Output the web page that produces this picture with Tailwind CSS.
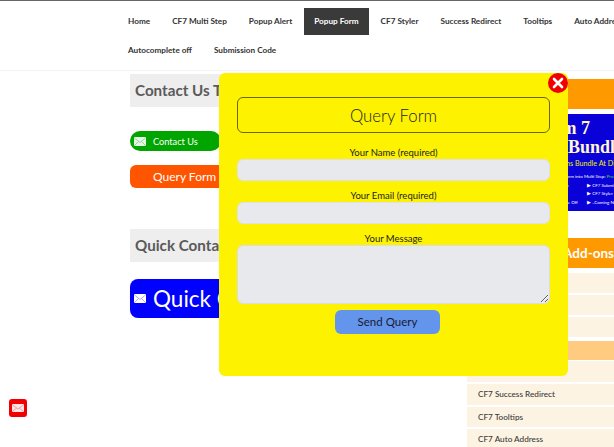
<!DOCTYPE html>
<html lang="en">
<head>
    <meta charset="UTF-8">
    <meta name="viewport" content="width=device-width, initial-scale=1.0">
    <title>Popup Form</title>
    <script src="https://cdn.jsdelivr.net/npm/@tailwindcss/browser@4"></script>
</head>
<body class="relative h-[447px] overflow-hidden bg-white font-['Lato','Open_Sans',sans-serif]">
    <!-- header -->
    <header class="h-[71px] border-t border-t-[#666] border-b border-b-[#f3f3f3] pl-[118px] pt-[7px]">
        <nav class="flex w-[520px] flex-wrap text-[8.2px] font-bold leading-[27px] text-[#333]">
            <a class="px-[10px] mr-[2px]">Home</a>
            <a class="px-[10px] mr-[2px]">CF7 Multi Step</a>
            <a class="px-[10px] mr-[2px]">Popup Alert</a>
            <a class="px-[10px] mr-[2px] bg-[#3a3a3a] text-white">Popup Form</a>
            <a class="px-[10px] mr-[2px]">CF7 Styler</a>
            <a class="px-[10px] mr-[2px]">Success Redirect</a>
            <a class="px-[10px] mr-[2px]">Tooltips</a>
            <a class="px-[10px] mr-[2px]">Auto Address</a>
            <a class="mt-[2px] px-[10px] mr-[2px]">Autocomplete off</a>
            <a class="mt-[2px] px-[10px] mr-[2px]">Submission Code</a>
        </nav>
    </header>

    <main class="flex pl-[130px]">
        <!-- left column -->
        <section class="w-[325px] pt-[3px]">
            <h2 class="flex h-[33px] items-center bg-[#eeeeee] px-[5px] text-[15.2px] font-bold text-[#5a5a5a]">Contact Us Today</h2>
            <a class="mt-[24px] flex h-[20px] w-[91px] items-center rounded-[10px] bg-[#00a500] pl-[4px] pt-[1px] text-[9.2px] text-white">
                <svg class="mr-[7px] h-[9px] w-[12px]" viewBox="0 0 24 18"><rect width="24" height="18" rx="2" fill="#fff" opacity=".9"/><path d="M1 2l11 9 11-9M1 17l8-8M23 17l-8-8" fill="none" stroke="#7fc97f" stroke-width="1.5"/></svg>
                Contact Us
            </a>
            <a class="mt-[14px] flex h-[23px] w-[180px] items-center rounded-[6px] bg-[#ff5500] pl-[23px] text-[12px] text-white">Query Form</a>
            <h2 class="mt-[41px] flex h-[33px] items-center bg-[#eeeeee] px-[5px] text-[15.2px] font-bold text-[#5a5a5a]">Quick Contact</h2>
            <a class="mt-[17px] flex h-[39px] w-[240px] items-center rounded-[8px] bg-[#0000ff] pl-[4px] text-[22.5px] text-white">
                <svg class="mr-[7px] h-[9px] w-[12px]" viewBox="0 0 24 18"><rect width="24" height="18" rx="2" fill="#fff"/><path d="M1 2l11 9 11-9M1 17l8-8M23 17l-8-8" fill="none" stroke="#8f8fff" stroke-width="1.5"/></svg>
                Quick Contact
            </a>
        </section>

        <!-- sidebar -->
        <aside class="ml-[12px] w-[147px] shrink-0 pt-[8px]">
            <div class="h-[30px] bg-[#ff9900]"></div>
            <div class="mt-[5px] h-[97px] overflow-hidden bg-[#0a00d8] pt-[5px] text-white">
                <p class="flex w-[123px] justify-end whitespace-nowrap font-['Liberation_Serif',serif] text-[18px] leading-[18px] font-bold text-[#fff6d0]">Contact Form 7</p>
                <p class="ml-[101px] whitespace-nowrap font-['Liberation_Serif',serif] text-[18px] leading-[20px] font-bold text-[#fff6d0]">Bundle</p>
                <p class="ml-[99px] mt-[1px] whitespace-nowrap text-[7.2px] leading-[11px] text-[#e6f000]">ns Bundle At Discount</p>
                <div class="ml-[99px] mt-[4px] grid w-[100px] grid-cols-[21px_1fr] text-[4.5px] leading-[8.5px]">
                    <span class="col-span-2 whitespace-nowrap">orm into Multi Step: <span class="text-[#35e035]">Pro</span></span>
                    <span>n</span><span class="whitespace-nowrap">&#9654; CF7 Submission</span>
                    <span></span><span class="whitespace-nowrap">&#9654; CF7 Styler</span>
                    <span class="whitespace-nowrap">te Off</span><span class="whitespace-nowrap">&#9654; ..Coming Next</span>
                </div>
            </div>
            <div class="mt-[27px] flex h-[30px] items-center justify-end overflow-hidden whitespace-nowrap bg-[#ff9900] text-[13.5px] font-bold text-white">CF7 Add-ons</div>
            <ul class="mt-[5px] flex flex-col gap-[2px] text-[8.2px] font-medium text-[#3a3a3a]">
                <li class="flex h-[20px] items-center bg-[#fdf3e3] pl-[11px]">CF7 Multi Step</li>
                <li class="flex h-[20px] items-center bg-[#fdf3e3] pl-[11px]">CF7 Popup Alert</li>
                <li class="flex h-[20px] items-center bg-[#fdf3e3] pl-[11px]">CF7 Autocomplete</li>
                <li class="mt-[2px] flex h-[19px] items-center bg-[#ffcb80] pl-[11px]">CF7 Popup Form</li>
                <li class="-mt-[1px] flex h-[21px] items-center bg-[#fdf3e3] pl-[11px]">CF7 Styler</li>
                <li class="flex h-[21px] items-center bg-[#fdf3e3] pl-[11px]">CF7 Success Redirect</li>
                <li class="flex h-[20px] items-center bg-[#fdf3e3] pl-[11px]">CF7 Tooltips</li>
                <li class="flex h-[20px] items-center bg-[#fdf3e3] pl-[11px]">CF7 Auto Address</li>
            </ul>
        </aside>
    </main>

    <!-- floating button -->
    <a class="absolute left-[9px] top-[399px] flex h-[18px] w-[18px] items-center justify-center rounded-[3px] bg-[#f00000]">
        <svg class="h-[8px] w-[12px]" viewBox="0 0 24 16"><rect width="24" height="16" rx="2" fill="#fff" opacity=".9"/><path d="M1 2l11 8 11-8M1 15l8-7M23 15l-8-7" fill="none" stroke="#f08080" stroke-width="1.5"/></svg>
    </a>

    <!-- popup -->
    <div class="absolute left-[219px] top-[73px] h-[303px] w-[349px] rounded-[6px] bg-[#fdf200] px-[18px] pt-[24px] text-[#222]">
        <button class="absolute right-0 top-0 flex h-[20px] w-[20px] items-center justify-center rounded-full bg-[#f00000]">
            <svg class="h-[12px] w-[12px]" viewBox="0 0 12 12"><path d="M2 2l8 8M10 2l-8 8" stroke="#fff" stroke-width="2.6" stroke-linecap="round"/></svg>
        </button>
        <h3 class="flex h-[36px] items-center justify-center rounded-[6px] border border-[#6b6500] pt-[1px] text-[16.8px] font-light text-[#222]">Query Form</h3>
        <form class="flex flex-col items-center text-[9.5px]">
            <label class="mt-[13px] leading-[13px]">Your Name (required)</label>
            <input class="h-[22px] w-full rounded-[6px] border border-[#e0e0e6] bg-[#e8e9ed]">
            <label class="mt-[8px] leading-[13px]">Your Email (required)</label>
            <input class="h-[22px] w-full rounded-[6px] border border-[#e0e0e6] bg-[#e8e9ed]">
            <label class="mt-[8px] leading-[13px]">Your Message</label>
            <textarea class="h-[59px] w-full rounded-[6px] border border-[#dcdce2] bg-[#e8e9ed]"></textarea>
            <button type="button" class="mt-[6px] mr-[12px] h-[24px] w-[105px] rounded-[6px] bg-[#6495ed] text-[11.5px] text-[#1a1a2e]">Send Query</button>
        </form>
    </div>
</body>
</html>
